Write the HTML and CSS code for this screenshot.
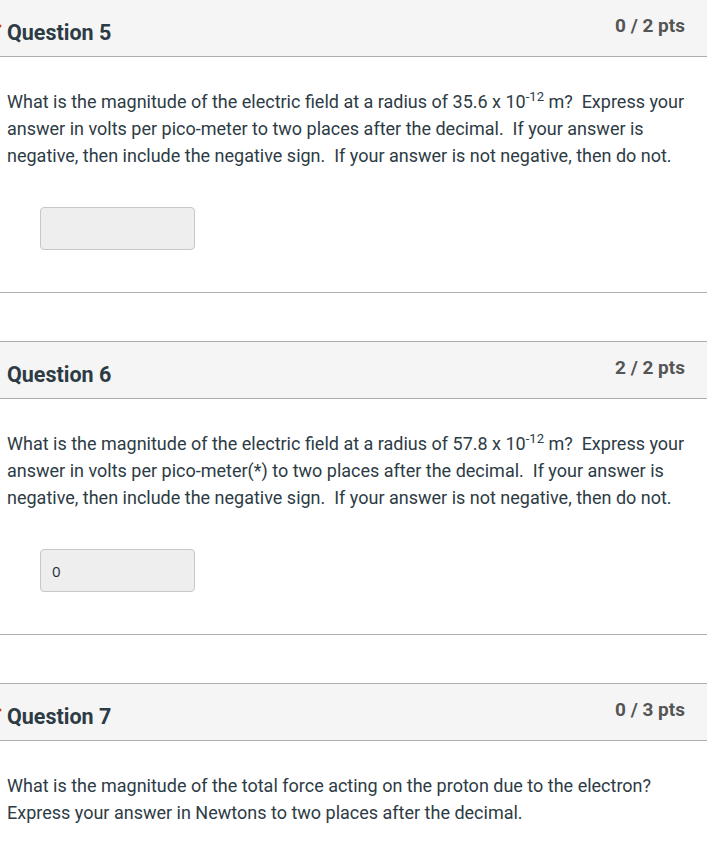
FILE: index.html
```html
<!DOCTYPE html>
<html>
<head>
<meta charset="utf-8">
<link rel="stylesheet" href="styles.css">
</head>
<body>
<div class="page">
  <div class="question first">
    <div class="q-header">
      <span class="flag"></span>
      <span class="q-title">Question 5</span>
      <span class="q-pts">0 / 2 pts</span>
    </div>
    <div class="q-body">
      <p class="q-text">What is the magnitude of the electric field at a radius of 35.6 x 10<sup>-12</sup> m?&nbsp; Express your answer in volts per pico-meter to two places after the decimal.&nbsp; If your answer is negative, then include the negative sign.&nbsp; If your answer is not negative, then do not.</p>
      <div class="answer"><span class="answer-box"></span></div>
    </div>
  </div>
  <div class="question">
    <div class="q-header">
      <span class="q-title">Question 6</span>
      <span class="q-pts">2 / 2 pts</span>
    </div>
    <div class="q-body">
      <p class="q-text">What is the magnitude of the electric field at a radius of 57.8 x 10<sup>-12</sup> m?&nbsp; Express your answer in volts per pico-meter(*) to two places after the decimal.&nbsp; If your answer is negative, then include the negative sign.&nbsp; If your answer is not negative, then do not.</p>
      <div class="answer"><span class="answer-box">0</span></div>
    </div>
  </div>
  <div class="question">
    <div class="q-header">
      <span class="flag"></span>
      <span class="q-title">Question 7</span>
      <span class="q-pts">0 / 3 pts</span>
    </div>
    <div class="q-body">
      <p class="q-text">What is the magnitude of the total force acting on the proton due to the electron?&nbsp; Express your answer in Newtons to two places after the decimal.</p>
    </div>
  </div>
</div>
</body>
</html>
```
FILE: styles.css
```css
html, body {
  margin: 0;
  padding: 0;
  background: #ffffff;
}
body {
  font-family: Roboto, "Liberation Sans", Arial, sans-serif;
  color: #2d3b45;
}
.page {
  width: 707px;
  overflow: hidden;
}
.question {
  margin-top: 48px;
}
.question.first {
  margin-top: -1px;
}
.q-header {
  position: relative;
  display: flex;
  justify-content: space-between;
  align-items: flex-start;
  height: 56px;
  box-sizing: content-box;
  background: #f5f5f5;
  border-top: 1px solid #adadad;
  border-bottom: 1px solid #adadad;
  padding: 0 22px 0 7px;
}
.flag {
  position: absolute;
  left: -3px;
  top: 24px;
  width: 4px;
  height: 4px;
  background: #d0342c;
  transform: rotate(45deg);
}
.q-title {
  font-size: 21.5px;
  font-weight: 700;
  line-height: 26px;
  padding-top: 20px;
  color: #2d3b45;
}
.q-pts {
  font-size: 19px;
  font-weight: 700;
  line-height: 22px;
  padding-top: 15px;
  color: #555555;
}
.q-body {
  border-bottom: 1px solid #adadad;
  padding: 31px 16px 42px 7px;
}
.question:last-child .q-body {
  border-bottom: none;
}
.q-text {
  margin: 0;
  font-size: 18px;
  line-height: 27px;
}
.q-text sup {
  font-size: 13px;
  line-height: 0;
  vertical-align: 7px;
}
.answer {
  margin-top: 38px;
  padding-left: 33px;
}
.answer-box {
  display: flex;
  align-items: center;
  width: 155px;
  height: 43px;
  box-sizing: border-box;
  background: #eeeeee;
  border: 1px solid #c8c8c8;
  border-radius: 4px;
  padding-left: 11px;
  font-family: "Open Sans", "Noto Sans", sans-serif;
  font-size: 15px;
  color: #1f2d3d;
}
```
